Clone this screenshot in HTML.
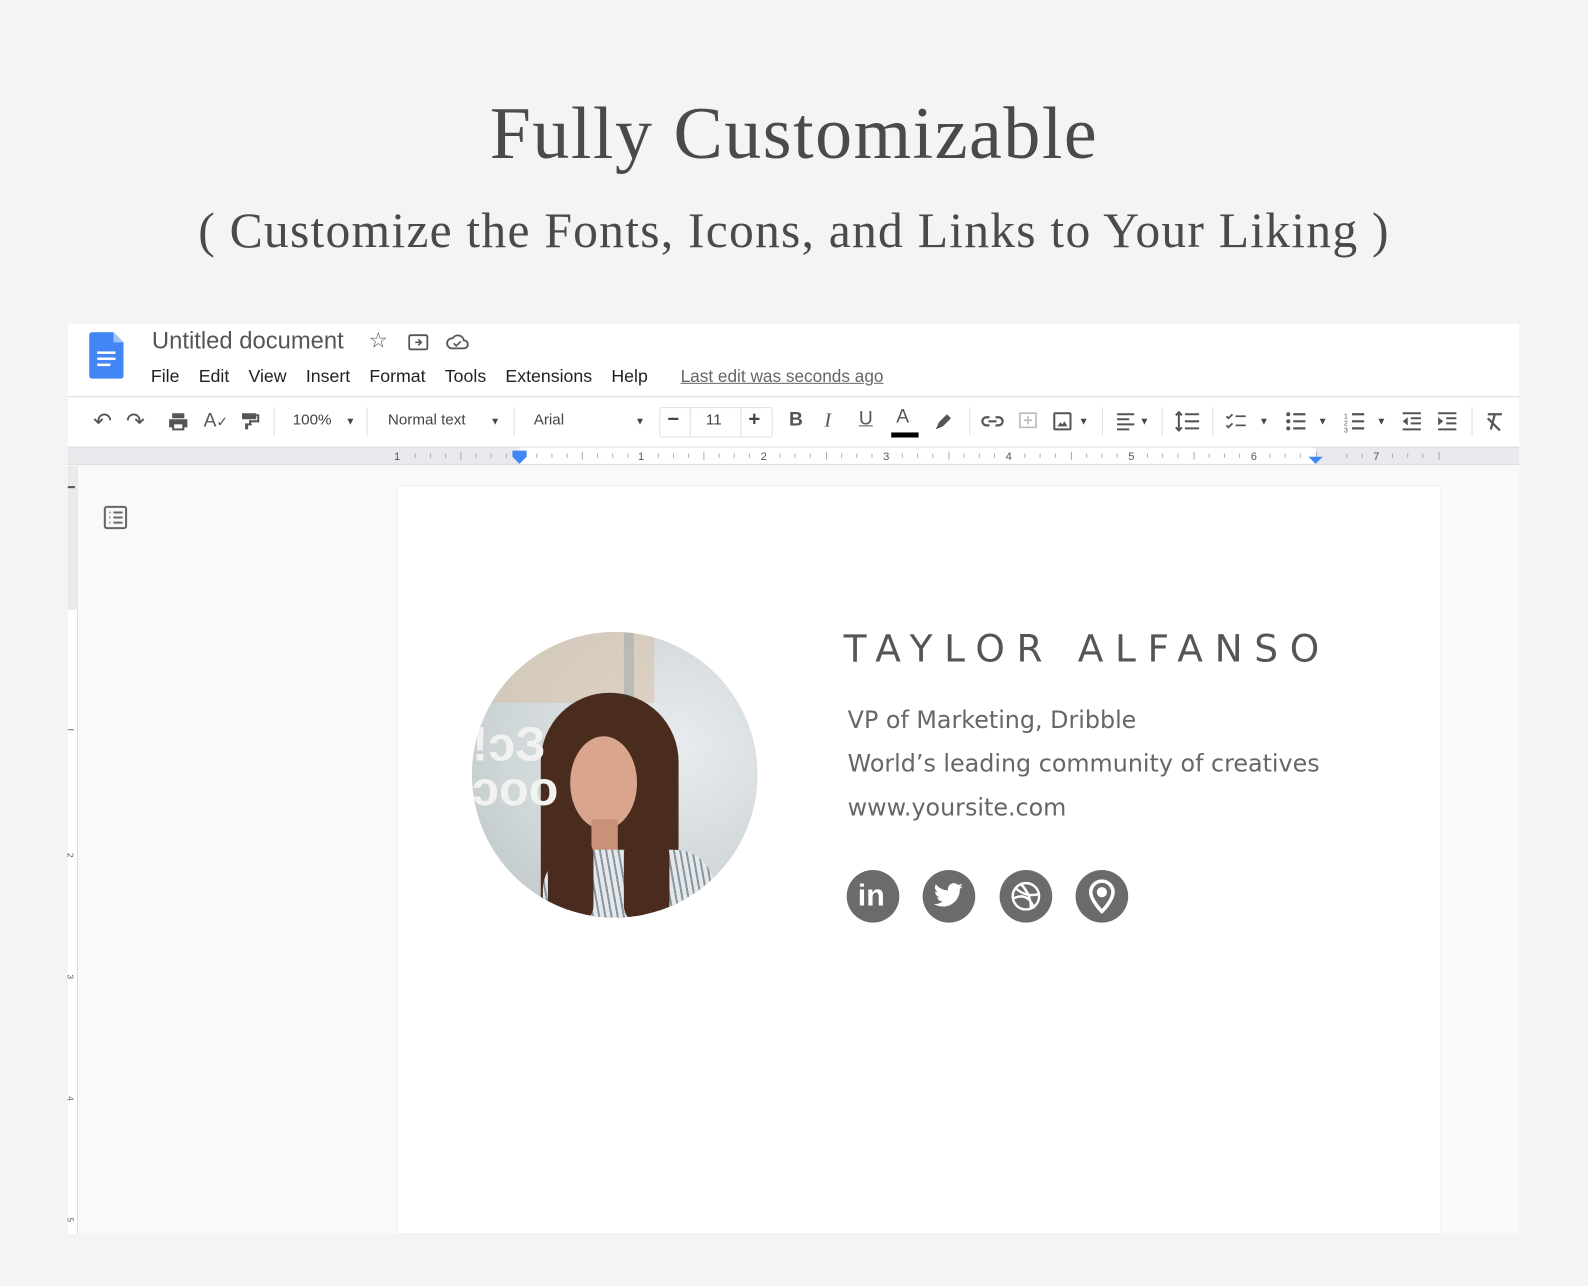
<!DOCTYPE html>
<html><head><meta charset="utf-8"><style>
*{margin:0;padding:0;box-sizing:border-box}
html,body{width:1588px;height:1286px;overflow:hidden;background:#f4f4f2}
#w{position:absolute;left:0;top:0;width:1568px;height:1270px;transform:scale(1.01276);transform-origin:0 0;font-family:"Liberation Sans",sans-serif}
.a{position:absolute}
h1{position:absolute;top:90px;left:0;width:1568px;text-align:center;font-family:"Liberation Serif",serif;font-weight:normal;font-size:73px;color:#4a4a4c;letter-spacing:1.5px}
h2{position:absolute;top:199px;left:0;width:1568px;text-align:center;font-family:"Liberation Serif",serif;font-weight:normal;font-size:49px;color:#4a4a4c;letter-spacing:1.2px}
.menu span{margin-right:19px}
.tb{position:absolute;top:406px;font-size:15px;color:#444}
.ic{position:absolute;top:405px;width:22px;height:22px}
.sig{font-family:"DejaVu Sans","Liberation Sans",sans-serif;color:#666}
.soc{position:absolute;top:859px;width:52px;height:52px;border-radius:50%;background:#6b6b6b}
</style></head><body><div id="w">
<h1>Fully Customizable</h1>
<h2>( Customize the Fonts, Icons, and Links to Your Liking )</h2>

<div class="a" style="left:67px;top:320px;width:1433px;height:898px;background:#f8f9fa"></div>
<div class="a" style="left:67px;top:320px;width:1433px;height:72px;background:#fff;border-bottom:1px solid #e0e0e0"></div>
<svg class="a" style="left:88px;top:328px" width="34" height="46" viewBox="0 0 34 46"><path d="M3 0h21l10 10v33a3 3 0 0 1-3 3H3a3 3 0 0 1-3-3V3a3 3 0 0 1 3-3z" fill="#4285f4"/><path d="M24 0v10h10z" fill="#a1c2fa"/><rect x="8" y="19" width="18" height="2.5" fill="#fff"/><rect x="8" y="25" width="18" height="2.5" fill="#fff"/><rect x="8" y="31" width="13" height="2.5" fill="#fff"/></svg>
<div class="a" style="left:150px;top:323px;font-size:23.5px;color:#555">Untitled document</div>
<div class="a" style="left:364px;top:324px;font-size:21px;color:#555">☆</div>
<svg class="a" style="left:403px;top:329px" width="20" height="17"><rect x="1" y="2" width="18" height="14" rx="1.5" fill="none" stroke="#555" stroke-width="1.8"/><path d="M7 9h6M10 6l3 3-3 3" fill="none" stroke="#555" stroke-width="1.6"/></svg>
<svg class="a" style="left:440px;top:329px" width="23" height="17"><path d="M6 15h12a4 4 0 0 0 0-8 6 6 0 0 0-11-2 5 5 0 0 0-1 10z" fill="none" stroke="#555" stroke-width="1.8"/><path d="M8 10l2.5 2.5 4.5-4.5" fill="none" stroke="#555" stroke-width="1.6"/></svg>
<div class="a menu" style="left:149px;top:361px;font-size:17.5px;color:#222"><span>File</span><span>Edit</span><span>View</span><span>Insert</span><span>Format</span><span>Tools</span><span>Extensions</span><span>Help</span></div>
<div class="a" style="left:672px;top:362px;font-size:17px;color:#666;text-decoration:underline">Last edit was seconds ago</div>

<!-- toolbar -->
<div class="a" style="left:67px;top:393px;width:1433px;height:48px;background:#fff"></div>
<div class="a" style="left:92px;top:403px;font-size:22px;color:#555;letter-spacing:14px">↶↷</div>
<svg class="ic" style="left:165px" viewBox="0 0 22 22"><path d="M5 3h12v5H5z M2 9h18v8h-3v3H5v-3H2z" fill="#555"/><rect x="7" y="14" width="8" height="4" fill="#fff"/></svg>
<div class="a" style="left:201px;top:405px;font-size:19px;color:#555">A<span style="font-size:14px">✓</span></div>
<svg class="ic" style="left:236px" viewBox="0 0 22 22"><path d="M3 3h14v6H3z M10 9v4h-4v6h3v-4h4" fill="#555"/><path d="M17 5h2v6h-8v3" fill="none" stroke="#555" stroke-width="2"/></svg>
<div class="a" style="left:270px;top:402px;width:1px;height:28px;background:#ddd"></div>
<div class="tb" style="left:289px">100%</div><div class="tb" style="left:341px;font-size:10px;top:411px">▼</div>
<div class="a" style="left:362px;top:402px;width:1px;height:28px;background:#ddd"></div>
<div class="tb" style="left:383px">Normal text</div><div class="tb" style="left:484px;font-size:10px;top:411px">▼</div>
<div class="a" style="left:507px;top:402px;width:1px;height:28px;background:#ddd"></div>
<div class="tb" style="left:527px">Arial</div><div class="tb" style="left:627px;font-size:10px;top:411px">▼</div>
<div class="a" style="left:651px;top:402px;width:112px;height:30px;border:1px solid #ddd;border-radius:3px"></div>
<div class="a" style="left:681px;top:402px;width:51px;height:30px;border-left:1px solid #ddd;border-right:1px solid #ddd"></div>
<div class="tb" style="left:659px;font-size:20px;top:403px;font-weight:bold">−</div>
<div class="tb" style="left:697px">11</div>
<div class="tb" style="left:739px;font-size:20px;top:403px;font-weight:bold">+</div>
<div class="tb" style="left:779px;font-size:19px;top:404px;font-weight:bold;color:#555">B</div>
<div class="tb" style="left:814px;font-size:20px;top:404px;font-style:italic;font-family:'Liberation Serif';color:#555">I</div>
<div class="tb" style="left:848px;font-size:19px;top:403px;text-decoration:underline;color:#555">U</div>
<div class="tb" style="left:885px;font-size:19px;top:401px;color:#555">A</div>
<div class="a" style="left:880px;top:427px;width:27px;height:5px;background:#000"></div>
<svg class="ic" style="left:921px" viewBox="0 0 22 22"><path d="M3 19l3-7 8-8 4 4-8 8z" fill="#555"/></svg>
<div class="a" style="left:957px;top:402px;width:1px;height:28px;background:#ddd"></div>
<svg class="ic" style="left:967px;width:26px" viewBox="0 0 26 22"><path d="M10 7H7a4 4 0 0 0 0 8h3M16 7h3a4 4 0 0 1 0 8h-3M9 11h8" fill="none" stroke="#555" stroke-width="2.2"/></svg>
<svg class="ic" style="left:1004px" viewBox="0 0 22 22"><rect x="3" y="3" width="16" height="14" fill="none" stroke="#bbb" stroke-width="1.6"/><path d="M11 6v8M7 10h8" stroke="#bbb" stroke-width="1.6"/></svg>
<svg class="ic" style="left:1038px" viewBox="0 0 22 22"><rect x="3" y="3" width="16" height="16" rx="1" fill="none" stroke="#555" stroke-width="2"/><path d="M6 16l3-4 2 2 2-3 3 5z" fill="#555"/></svg>
<div class="tb" style="left:1065px;font-size:10px;top:411px">▼</div>
<div class="a" style="left:1088px;top:402px;width:1px;height:28px;background:#ddd"></div>
<svg class="ic" style="left:1101px" viewBox="0 0 22 22"><path d="M2 4h17M2 9h12M2 14h17M2 19h12" stroke="#555" stroke-width="2"/></svg>
<div class="tb" style="left:1125px;font-size:10px;top:411px">▼</div>
<div class="a" style="left:1147px;top:402px;width:1px;height:28px;background:#ddd"></div>
<svg class="ic" style="left:1160px;width:26px" viewBox="0 0 26 22"><path d="M4 2v18M1 5l3-3 3 3M1 17l3 3 3-3M10 4h14M10 11h14M10 18h14" fill="none" stroke="#555" stroke-width="2"/></svg>
<div class="a" style="left:1197px;top:402px;width:1px;height:28px;background:#ddd"></div>
<svg class="ic" style="left:1210px" viewBox="0 0 22 22"><path d="M1 6l2 2 4-4M1 15l2 2 4-4M10 6h10M10 15h10" fill="none" stroke="#555" stroke-width="1.8"/></svg>
<div class="tb" style="left:1243px;font-size:10px;top:411px">▼</div>
<svg class="ic" style="left:1269px" viewBox="0 0 22 22"><circle cx="3" cy="4" r="2" fill="#555"/><circle cx="3" cy="11" r="2" fill="#555"/><circle cx="3" cy="18" r="2" fill="#555"/><path d="M8 4h12M8 11h12M8 18h12" stroke="#555" stroke-width="2.2"/></svg>
<div class="tb" style="left:1301px;font-size:10px;top:411px">▼</div>
<svg class="ic" style="left:1327px" viewBox="0 0 22 22"><text x="0" y="8" font-size="7" fill="#555">1</text><text x="0" y="15" font-size="7" fill="#555">2</text><text x="0" y="22" font-size="7" fill="#555">3</text><path d="M8 4h12M8 11h12M8 18h12" stroke="#555" stroke-width="2.2"/></svg>
<div class="tb" style="left:1359px;font-size:10px;top:411px">▼</div>
<svg class="ic" style="left:1383px" viewBox="0 0 22 22"><path d="M2 3h18M10 8h10M10 13h10M2 19h18" stroke="#555" stroke-width="2"/><path d="M7 7l-5 4 5 4z" fill="#555"/></svg>
<svg class="ic" style="left:1418px" viewBox="0 0 22 22"><path d="M2 3h18M10 8h10M10 13h10M2 19h18" stroke="#555" stroke-width="2"/><path d="M2 7l5 4-5 4z" fill="#555"/></svg>
<div class="a" style="left:1453px;top:402px;width:1px;height:28px;background:#ddd"></div>
<svg class="ic" style="left:1465px" viewBox="0 0 22 22"><path d="M4 4h14M11 4l-4 15M4 8l12 12" stroke="#555" stroke-width="2.2" fill="none"/></svg>

<!-- ruler -->
<div class="a" style="left:67px;top:441px;width:1433px;height:18px;background:#e8eaed;border-top:1px solid #dadce0;border-bottom:1px solid #dadce0"></div>
<div class="a" style="left:513px;top:442px;width:786px;height:16px;background:#fff"></div>
<svg class="a" style="left:380px;top:442px" width="1060" height="16">
<g fill="#555" font-size="11" font-family="Liberation Sans"><text x="9" y="12">1</text><text x="250" y="12">1</text><text x="371" y="12">2</text><text x="492" y="12">3</text><text x="613" y="12">4</text><text x="734" y="12">5</text><text x="855" y="12">6</text><text x="976" y="12">7</text></g>
<g stroke="#aaa" stroke-width="1">
<path d="M30 6v4M45 6v4M60 6v4M75 4v8M90 6v4M105 6v4M120 6v4M150 6v4M165 6v4M180 6v4M195 4v8M210 6v4M225 6v4M240 6v4M270 6v4M285 6v4M300 6v4M315 4v8M330 6v4M345 6v4M360 6v4M390 6v4M405 6v4M420 6v4M436 4v8M451 6v4M466 6v4M481 6v4M511 6v4M526 6v4M541 6v4M557 4v8M572 6v4M587 6v4M602 6v4M632 6v4M647 6v4M662 6v4M678 4v8M693 6v4M708 6v4M723 6v4M753 6v4M768 6v4M783 6v4M799 4v8M814 6v4M829 6v4M844 6v4M874 6v4M889 6v4M904 6v4M920 4v8M950 6v4M965 6v4M995 6v4M1010 6v4M1025 6v4M1041 4v8"/></g>
<path d="M126 3h14v6l-7 7-7-7z" fill="#4285f4"/><path d="M912 9h14l-7 7z" fill="#4285f4"/></svg>

<!-- vertical ruler -->
<div class="a" style="left:67px;top:460px;width:10px;height:758px;background:#fff;border-right:1px solid #dadce0"></div>
<div class="a" style="left:67px;top:460px;width:10px;height:142px;background:#e8eaed"></div>
<div class="a" style="left:67px;top:480px;width:7px;height:2px;background:#555"></div>
<div class="a" style="left:67px;top:720px;width:6px;height:1px;background:#777"></div>
<div class="a" style="left:67px;top:840px;font-size:8px;color:#555;transform:rotate(90deg)">2</div>
<div class="a" style="left:67px;top:960px;font-size:8px;color:#555;transform:rotate(90deg)">3</div>
<div class="a" style="left:67px;top:1080px;font-size:8px;color:#555;transform:rotate(90deg)">4</div>
<div class="a" style="left:67px;top:1200px;font-size:8px;color:#555;transform:rotate(90deg)">5</div>

<svg class="a" style="left:102px;top:499px" width="24" height="24"><rect x="1.5" y="1.5" width="21" height="21" rx="2" fill="none" stroke="#666" stroke-width="2"/><path d="M6 7h1M6 12h1M6 17h1M10 7h9M10 12h9M10 17h9" stroke="#666" stroke-width="2"/></svg>

<!-- page -->
<div class="a" style="left:393px;top:480px;width:1029px;height:738px;background:#fff;box-shadow:0 0 2px rgba(0,0,0,.15)"></div>

<!-- photo -->
<div class="a" style="left:466px;top:624px;width:282px;height:282px;border-radius:50%;overflow:hidden;background:radial-gradient(ellipse at 70% 40%,#e8ecee 0%,#cfd6d8 60%,#b9c0c2 100%)">
 <div class="a" style="left:0;top:0;width:180px;height:70px;background:#d8c3a8;opacity:.6"></div>
 <div class="a" style="left:150px;top:0;width:10px;height:200px;background:#9aa;opacity:.5"></div>
 <div class="a" style="left:68px;top:60px;width:136px;height:240px;border-radius:68px 68px 20px 20px;background:#4a2c1e"></div>
 <div class="a" style="left:97px;top:103px;width:66px;height:92px;border-radius:50%;background:#d9a58c"></div>
 <div class="a" style="left:118px;top:185px;width:26px;height:40px;background:#c99278"></div>
 <div class="a" style="left:70px;top:215px;width:170px;height:90px;border-radius:40px 40px 0 0;background:repeating-linear-gradient(80deg,#e5e8ea 0 4px,#8a97a0 4px 6px)"></div>
 <div class="a" style="left:75px;top:200px;width:45px;height:90px;border-radius:20px;background:#4a2c1e"></div>
 <div class="a" style="left:150px;top:200px;width:45px;height:90px;border-radius:20px;background:#4a2c1e"></div>
 <div class="a" style="left:0;top:90px;font-size:48px;color:#f2f2f0;font-weight:bold;line-height:44px">!ɔЗ<br>ɔoo</div>
</div>

<div class="a sig" style="left:833px;top:619px;font-size:37px;letter-spacing:11.5px;color:#555">TAYLOR ALFANSO</div>
<div class="a sig" style="left:837px;top:697px;font-size:23.5px">VP of Marketing, Dribble</div>
<div class="a sig" style="left:837px;top:740px;font-size:23.5px">World’s leading community of creatives</div>
<div class="a sig" style="left:837px;top:783px;font-size:23.5px">www.yoursite.com</div>

<div class="soc" style="left:836px"><div class="a" style="left:11px;top:9px;font-size:30px;font-weight:bold;color:#fff;font-family:'Liberation Sans'">in</div></div>
<div class="soc" style="left:911px"><svg class="a" style="left:11px;top:12px" width="30" height="28" viewBox="0 0 24 22"><path d="M23 3a9 9 0 0 1-2.7.8A4.7 4.7 0 0 0 22.3 1a9 9 0 0 1-3 1.1A4.7 4.7 0 0 0 11.3 6.4 13.3 13.3 0 0 1 1.6 1.5a4.7 4.7 0 0 0 1.5 6.3A4.7 4.7 0 0 1 1 7.2a4.7 4.7 0 0 0 3.7 4.6 4.7 4.7 0 0 1-2.1.1 4.7 4.7 0 0 0 4.4 3.2A9.4 9.4 0 0 1 0 17a13.3 13.3 0 0 0 7.2 2.1c8.6 0 13.4-7.2 13.4-13.4v-.6A9.6 9.6 0 0 0 23 3z" fill="#fff"/></svg></div>
<div class="soc" style="left:987px"><svg class="a" style="left:10px;top:10px" width="32" height="32" viewBox="0 0 32 32" fill="none" stroke="#fff" stroke-width="2.4"><circle cx="16" cy="16" r="13"/><path d="M6 8c6 6 14 8 22 6M4 18c8-4 16-2 20 10M11 4c6 6 10 14 10 24"/></svg></div>
<div class="soc" style="left:1062px"><svg class="a" style="left:12px;top:9px" width="28" height="34" viewBox="0 0 28 34"><path d="M14 2a11 11 0 0 1 11 11c0 8-11 19-11 19S3 21 3 13A11 11 0 0 1 14 2z" fill="none" stroke="#fff" stroke-width="3.5"/><circle cx="14" cy="13" r="5" fill="#fff"/></svg></div>
</div></body></html>
